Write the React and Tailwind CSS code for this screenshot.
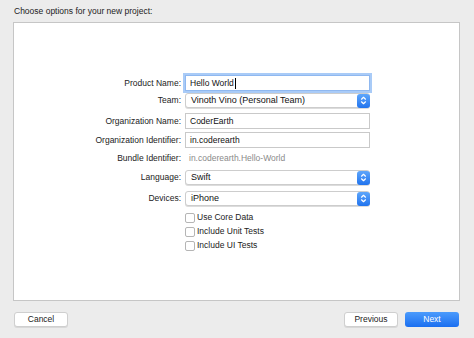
import React from 'react'

function Stepper() {
  return (
    <div className="w-[13px] h-[14px] rounded-[3px] bg-gradient-to-b from-[#5ea6fb] to-[#1f73ee] flex items-center justify-center mr-[-1px]">
      <svg width="7" height="9" viewBox="0 0 7 9" fill="none" stroke="white" strokeWidth="1.2" strokeLinecap="round" strokeLinejoin="round">
        <path d="M1.5 3.2 L3.5 1.3 L5.5 3.2" />
        <path d="M1.5 5.8 L3.5 7.7 L5.5 5.8" />
      </svg>
    </div>
  )
}

function Row({ label, children }) {
  return (
    <div className="flex items-center">
      <div className="w-[160px] pr-[4px] text-right text-[8.5px] text-[#222]">{label}</div>
      <div className="w-[185px]">{children}</div>
    </div>
  )
}

function Field({ value, focus }) {
  return (
    <div className={'h-[16px] flex items-center px-[4px] bg-white text-[8.5px] text-[#111] ' + (focus ? 'border border-[#8fb8f0] ring-2 ring-[#a9cbf7]' : 'border border-[#c9c9c9]')}>
      {value}
      {focus && <span className="w-px h-[11px] bg-black ml-px" />}
    </div>
  )
}

function Popup({ value }) {
  return (
    <div className="h-[15px] flex items-center justify-between pl-[5px] bg-white border border-[#cdcdcd] rounded-[3px] text-[9px] text-[#111] shadow-[0_1px_0_#dcdcdc]">
      <span>{value}</span>
      <Stepper />
    </div>
  )
}

function Check({ label }) {
  return (
    <div className="h-[11px] flex items-center gap-[2px] text-[8.5px] text-[#222]">
      <div className="w-[10px] h-[10px] rounded-[2px] border border-[#b5b5b5] bg-white" />
      {label}
    </div>
  )
}

export default function App() {
  return (
    <div className="w-[474px] h-[338px] bg-[#ececec] flex flex-col font-['Liberation_Sans',Arial,sans-serif] overflow-hidden">
      <div className="h-[22px] pl-[14px] pt-[5px] text-[8.5px] text-[#222]">Choose options for your new project:</div>
      <div className="ml-[13px] w-[447px] h-[279px] bg-white border border-[#c6c6c6] flex flex-col pt-[52px] pl-[11px]">
        <div className="flex flex-col">
          <Row label="Product Name:"><Field value="Hello World" focus /></Row>
          <div className="h-[2px]" />
          <Row label="Team:"><Popup value="Vinoth Vino (Personal Team)" /></Row>
          <div className="h-[5px]" />
          <Row label="Organization Name:"><Field value="CoderEarth" /></Row>
          <div className="h-[3px]" />
          <Row label="Organization Identifier:"><Field value="in.coderearth" /></Row>
          <div className="h-[2px]" />
          <Row label="Bundle Identifier:">
            <div className="h-[16px] flex items-center px-[4px] text-[8.5px] text-[#8a8a8a]">in.coderearth.Hello-World</div>
          </Row>
          <div className="h-[4px]" />
          <Row label="Language:"><Popup value="Swift" /></Row>
          <div className="h-[6px]" />
          <Row label="Devices:"><Popup value="iPhone" /></Row>
          <div className="h-[6px]" />
          <div className="pl-[160px] flex flex-col gap-[3px]">
            <Check label="Use Core Data" />
            <Check label="Include Unit Tests" />
            <Check label="Include UI Tests" />
          </div>
        </div>
      </div>
      <div className="flex items-center justify-between pl-[14px] pr-[15px] mt-[11px]">
        <button className="w-[54px] h-[15px] bg-white border border-[#cfcfcf] rounded-[3px] text-[8.5px] text-[#222] shadow-[0_1px_0_#d8d8d8] leading-none">Cancel</button>
        <div className="flex gap-[7px]">
          <button className="w-[54px] h-[15px] bg-white border border-[#cfcfcf] rounded-[3px] text-[8.5px] text-[#222] shadow-[0_1px_0_#d8d8d8] leading-none">Previous</button>
          <button className="w-[54px] h-[15px] bg-gradient-to-b from-[#4b9bfc] to-[#1a6ef0] rounded-[3px] text-[8.5px] text-white leading-none">Next</button>
        </div>
      </div>
    </div>
  )
}
